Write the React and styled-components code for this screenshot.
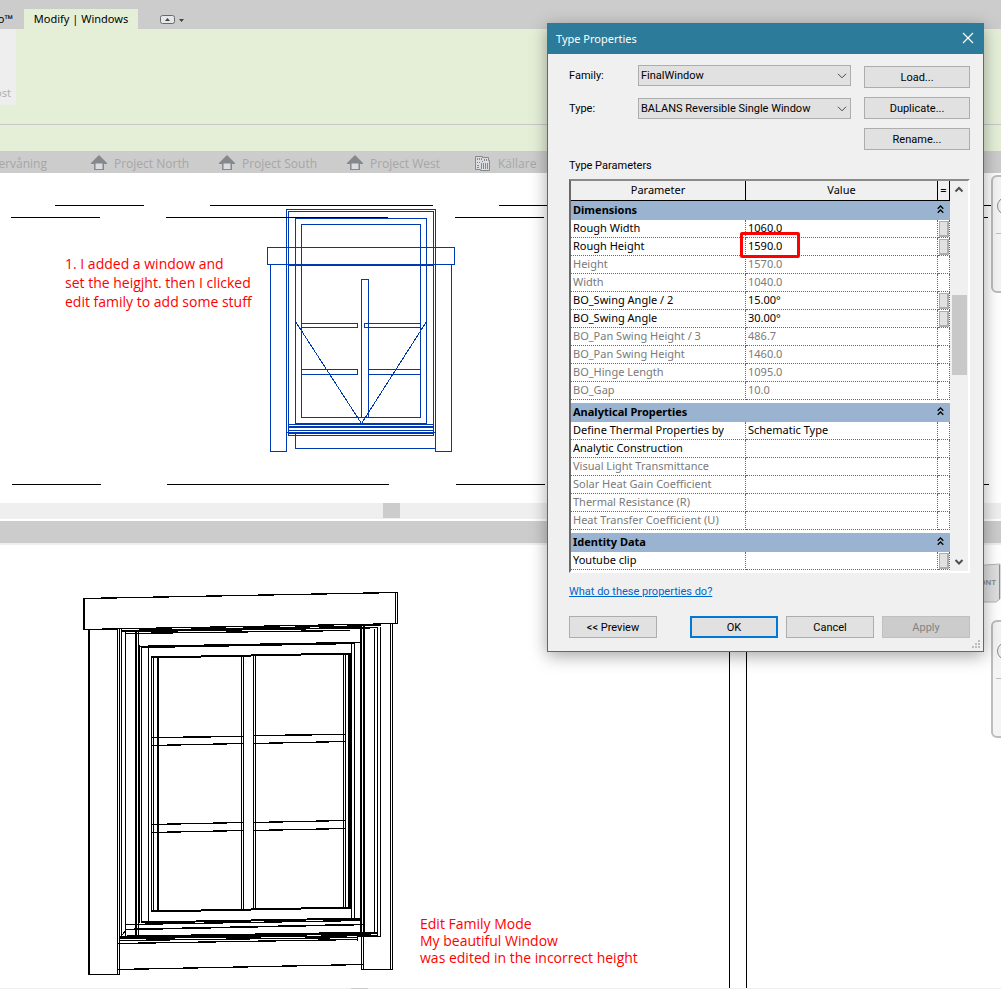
import React from 'react';
import styled, { createGlobalStyle, css } from 'styled-components';

const GlobalStyle = createGlobalStyle`
  * {
    box-sizing: border-box;
  }

  body {
    margin: 0;
    font-family: "Noto Sans", "Open Sans", sans-serif;
    font-size: 11px;
    color: #000;
    background: #fff;
  }

  button,
  select {
    font: inherit;
    color: inherit;
    margin: 0;
  }
`;

const Page = styled.div`
  position: relative;
  display: flex;
  flex-direction: column;
  min-height: 100vh;
  overflow: hidden;
`;

/* Ribbon */

const TabStrip = styled.header`
  display: flex;
  align-items: flex-end;
  height: 29px;
  background: #ccc;
`;

const CutTab = styled.span`
  display: flex;
  justify-content: flex-end;
  width: 13px;
  margin-right: 11px;
  line-height: 20px;
  overflow: hidden;
`;

const ActiveTab = styled.button`
  width: 114px;
  height: 20px;
  padding: 0;
  border: 0;
  line-height: 20px;
  white-space: nowrap;
  background: #e5efd8;
`;

const RibbonToggle = styled.button`
  display: flex;
  height: 20px;
  margin-left: 22px;
  padding: 5px 0 0;
  border: 0;
  background: none;
`;

const Ribbon = styled.div`
  height: 96px;
  background: #e5efd8;
  border-bottom: 1px solid #c8c8c8;
`;

const RibbonPanel = styled.div`
  display: flex;
  align-items: flex-end;
  justify-content: flex-end;
  width: 16px;
  height: 76px;
  padding: 0 5px 5px 0;
  overflow: hidden;
  color: #b0b0b0;
  background: #eee;
`;

const OptionsBar = styled.div`
  height: 26px;
  background: #e5efd8;
`;

const ViewTabs = styled.nav`
  display: flex;
  align-items: center;
  height: 22px;
  padding-top: 2px;
  font-family: "Open Sans", "Noto Sans", sans-serif;
  font-size: 12px;
  background: #ccc;
`;

const ViewTab = styled.a`
  display: flex;
  align-items: center;
  gap: 7px;
  flex: none;
  width: ${(props) => props.$width}px;
  color: #a6a6a6;
  text-decoration: none;
  white-space: nowrap;
  overflow: hidden;
  justify-content: ${(props) => (props.$cut ? 'flex-end' : 'flex-start')};
  padding-right: ${(props) => (props.$cut ? 44 : 0)}px;
`;

/* Views */

const View = styled.section`
  position: relative;
  display: flex;
  height: 330px;
  overflow: hidden;
  ${(props) =>
    props.$fill &&
    css`
      flex: 1;
      height: auto;
      min-height: 443px;
    `}
`;

const Drawing = styled.svg`
  flex: 1;
  height: auto;
  fill: none;
  shape-rendering: crispEdges;
`;

const Note = styled.p`
  position: absolute;
  left: ${(props) => props.$x}px;
  top: ${(props) => props.$y}px;
  margin: 0;
  font-family: "Open Sans", "Noto Sans", sans-serif;
  font-size: 14px;
  line-height: ${(props) => props.$leading}px;
  color: #f00;
  white-space: nowrap;
`;

const Widgets = styled.svg`
  position: absolute;
  top: 0;
  right: 0;
  width: 30px;
  height: 200px;
`;

const ViewScroll = styled.div`
  height: 16px;
  padding-left: 383px;
  background: #efefef;
`;

const ViewThumb = styled.div`
  width: 17px;
  height: 15px;
  background: #ccc;
`;

const ViewTitle = styled.div`
  height: 26px;
  background: #ccc;
  border: solid #efefef;
  border-width: 0 0 2px;
  border-top: 2px solid #fff;
`;

const BottomScroll = styled.div`
  height: 1px;
  padding-left: 351px;
  background: #eee;

  &::after {
    content: '';
    display: block;
    width: 17px;
    height: 1px;
    background: #ccc;
  }
`;

/* Dialog */

const Dialog = styled.section`
  position: absolute;
  top: 23px;
  right: 17px;
  width: 437px;
  border: 1px solid #2d7b9a;
  background: #f0f0f0;
  box-shadow: 0 4px 16px rgba(0, 0, 0, 0.35);
  font-family: Roboto, "Noto Sans", sans-serif;
`;

const TitleBar = styled.header`
  display: flex;
  align-items: center;
  justify-content: space-between;
  height: 30px;
  padding: 0 9px 2px 8px;
  color: #fff;
  background: #2d7b9a;
`;

const Title = styled.h1`
  margin: 0;
  font-family: "Noto Sans", sans-serif;
  font-size: 11px;
  font-weight: 400;
`;

const CloseButton = styled.button`
  display: flex;
  padding: 0;
  border: 0;
  background: none;
`;

const DialogBody = styled.div`
  padding: 11px 13px 13px 21px;
`;

const Pickers = styled.div`
  display: flex;
  justify-content: space-between;
`;

const Fields = styled.div`
  display: flex;
  flex-direction: column;
  gap: 12px;
`;

const Field = styled.label`
  display: grid;
  grid-template-columns: 69px 213px;
  align-items: center;
`;

const SelectBox = styled.span`
  display: grid;
  align-items: center;

  > * {
    grid-area: 1 / 1;
  }

  svg {
    justify-self: end;
    margin-right: 4px;
    pointer-events: none;
  }
`;

const Select = styled.select`
  appearance: none;
  width: 100%;
  height: 21px;
  padding: 0 2px;
  border: 1px solid #adadad;
  border-radius: 0;
  background: #e1e1e1;
`;

const ButtonStack = styled.div`
  display: flex;
  flex-direction: column;
  gap: 9px;
  padding-top: 1px;
`;

const Button = styled.button`
  width: ${(props) => (props.$wide ? 106 : 88)}px;
  height: 22px;
  padding: 0;
  border: 1px solid #adadad;
  background: #e1e1e1;

  ${(props) =>
    props.$primary &&
    css`
      border: 2px solid #0078d7;
    `}

  &:disabled {
    color: #838383;
    border-color: #bfbfbf;
    background: #ccc;
  }
`;

const Caption = styled.h2`
  margin: 8px 0 5px;
  font-size: 11px;
  font-weight: 400;
  line-height: 16px;
`;

const GridFrame = styled.div`
  display: flex;
  height: 394px;
  border: 2px solid #696969;
  border-color: #8a8a8a #fff #fff #696969;
  background: #fff;
`;

const Params = styled.table`
  flex: 1;
  width: 379px;
  height: 389px;
  table-layout: fixed;
  border-spacing: 0;
  font-family: "Noto Sans", sans-serif;
  line-height: 15px;
`;

const HeadCell = styled.th`
  height: 20px;
  padding: 0 0 2px;
  border-right: 1px solid #000;
  border-bottom: 1px solid #000;
  font-weight: 400;
  background: #f0f0f0;
`;

const GroupCell = styled.th`
  height: 19px;
  padding: 0 6px 2px 2px;
  font-weight: 700;
  text-align: left;
  background: #9ab3d0;
`;

const GroupLabel = styled.span`
  display: flex;
  align-items: center;
  justify-content: space-between;
`;

const Cell = styled.td`
  position: relative;
  height: 18px;
  padding: 0 0 2px 2px;
  border: 0 dotted #696969;
  border-width: 0 1px 1px 0;
  color: ${(props) => (props.$dim ? '#7a7a7a' : '#000')};
  white-space: nowrap;
`;

const LinkCell = styled(Cell)`
  padding: 0 0 0 1px;
`;

const GapCell = styled.td`
  height: 3px;
  padding: 0;
`;

const LinkButton = styled.button`
  display: block;
  width: 10px;
  height: 16px;
  padding: 0;
  border: 1px solid #adadad;
  border-right-width: 2px;
  border-bottom-width: 2px;
  background: #e1e1e1;
`;

const Highlight = styled.span`
  position: absolute;
  z-index: 1;
  left: -6px;
  top: -6px;
  width: 60px;
  height: 26px;
  border: 3px solid #f00;
  border-radius: 2px;
`;

const Scrollbar = styled.div`
  display: flex;
  flex-direction: column;
  align-items: center;
  width: 18px;
  background: #f0f0f0;
`;

const ScrollThumb = styled.div`
  width: 15px;
  height: 80px;
  margin: 95px 0 auto;
  background: #c8c8c8;
`;

const HelpLink = styled.a`
  display: inline-block;
  margin-top: 11px;
  line-height: 16px;
  color: #0066cc;
`;

const Actions = styled.footer`
  display: flex;
  gap: 8px;
  margin-top: 16px;

  button:first-child {
    margin-right: 25px;
  }
`;

const Grip = styled.svg`
  position: absolute;
  right: 2px;
  bottom: 2px;
`;

const groups = [
  {
    name: 'Dimensions',
    rows: [
      { name: 'Rough Width', value: '1060.0', link: true },
      { name: 'Rough Height', value: '1590.0', link: true, marked: true },
      { name: 'Height', value: '1570.0', dim: true },
      { name: 'Width', value: '1040.0', dim: true },
      { name: 'BO_Swing Angle / 2', value: '15.00°', link: true },
      { name: 'BO_Swing Angle', value: '30.00°', link: true },
      { name: 'BO_Pan Swing Height / 3', value: '486.7', dim: true },
      { name: 'BO_Pan Swing Height', value: '1460.0', dim: true },
      { name: 'BO_Hinge Length', value: '1095.0', dim: true },
      { name: 'BO_Gap', value: '10.0', dim: true },
    ],
  },
  {
    name: 'Analytical Properties',
    rows: [
      { name: 'Define Thermal Properties by', value: 'Schematic Type' },
      { name: 'Analytic Construction' },
      { name: 'Visual Light Transmittance', dim: true },
      { name: 'Solar Heat Gain Coefficient', dim: true },
      { name: 'Thermal Resistance (R)', dim: true },
      { name: 'Heat Transfer Coefficient (U)', dim: true },
    ],
  },
  {
    name: 'Identity Data',
    rows: [{ name: 'Youtube clip', link: true }],
  },
];

const HouseIcon = () => (
  <svg width="16" height="16" viewBox="0 0 16 16">
    <path d="M8 0 0 8v1h3v6h10V9h3V8z" fill="#85888d" />
    <path d="M4.500 8.500h7V14h-7z" fill="#dcdde0" />
  </svg>
);

const PlanIcon = () => (
  <svg width="17" height="17" viewBox="0 0 17 17" fill="none" stroke="#85888d">
    <path d="M1.500 1.500h7v1h6v3h1v10h-9v-1h-5z" fill="#dcdde0" />
    <path d="M3.500 3v2M5.500 3v2M7.500 3v2M3.500 7v1M5.500 7v1M3 10.500h2M10.500 4v2M12.500 4v2M7.500 8v6M9.500 8v6M11.500 8v6M13.500 8v6M3 12.500h2M8.500 6v1" />
  </svg>
);

const Chevron = () => (
  <svg width="10" height="6" viewBox="0 0 10 6" fill="none" stroke="#444">
    <path d="M1 .8 5 4.800 9 .8" />
  </svg>
);

const ScrollArrow = ({ down }) => (
  <svg width="18" height="19" viewBox="0 0 18 19" fill="none" stroke="#505050" strokeWidth="2">
    <path d={down ? 'M5.500 8 9 11.500 12.500 8' : 'M5.500 10.500 9 7l3.500 3.500'} />
  </svg>
);

const DoubleChevron = () => (
  <svg width="7" height="9" viewBox="0 0 7 9" fill="none" stroke="#000" strokeWidth="1.300">
    <path d="M.7 3.700 3.500 1l2.800 2.700M.7 7.700 3.500 5l2.800 2.700" />
  </svg>
);

// y, from, to
const levels = [
  [205, 55, 144], [205, 210, 433], [205, 499, 722], [205, 900, 996],
  [217, 11, 100], [217, 166, 388], [217, 455, 544], [217, 900, 988],
  [484, 12, 101], [484, 167, 389], [484, 456, 545], [484, 900, 989],
];

const ElevationDrawing = () => (
  <Drawing>
    <g stroke="#0038b0" transform="translate(0.500 -172.500)">
      <path d="M286 451V209h149v242M288 435V211h145v224zM295 423V218h131v205M301 417V224h119v193z" />
      <path d="M267 247h187v17H267zM288 265h145M270 264v187h16M451 264v187h-16" />
      <path d="M361 417V279h7v138M301 323h56v4h-56M420 323h-56v4h56M301 369h56v5h-56M420 369h-52M368 374h52" />
      <path d="M295 321 361 423 426 321" />
      <path d="M295 423h131M288 424h145M288 426h145M288 427h145M288 430h145M286 432h149M288 433h145M295 433v15h140" />
    </g>
    <g stroke="#000" transform="translate(0 -172.500)">
      {levels.map(([y, from, to]) => (
        <path key={`${y}-${from}`} d={`M${from} ${y}H${to}`} />
      ))}
    </g>
  </Drawing>
);

// x, top, bottom, stroke width
const uprights = [
  [83, 598, 629, 2], [395, 592, 623, 1], [397, 592, 623, 1],
  [88, 629, 974, 2], [117, 628, 974, 1], [119, 628, 974, 1], [121, 629, 937, 1],
  [125, 632, 935, 1], [135, 632, 935, 2], [138, 632, 935, 1], [139, 645, 922, 1],
  [141, 647, 922, 1], [148, 647, 922, 1], [151, 657, 911, 1], [153, 657, 911, 1],
  [157, 657, 911, 2], [241, 656, 909, 1], [243, 656, 909, 1], [253, 656, 909, 1],
  [255, 656, 909, 1], [343, 655, 908, 1], [345, 655, 908, 1], [348, 654, 908, 4],
  [351, 643, 918, 1], [354, 643, 918, 1], [360, 624, 932, 2], [363, 624, 932, 2],
  [361, 932, 969, 1], [363, 932, 969, 1], [374, 629, 933, 1], [377, 627, 935, 1],
  [380, 627, 936, 1], [390, 623, 969, 1], [392, 623, 969, 1], [357, 936, 940, 1],
];

// x1, y1, x2, y2, stroke width (thin when left out)
const rails = [
  [83, 598, 397, 592], [83, 629, 380, 623.500], [373, 623, 397, 623],
  [121, 630, 380, 625], [121, 631, 376, 627, 1.800], [125, 633, 349, 630],
  [138, 646, 360, 642, 1.600], [141, 647, 354, 643], [151, 657, 351, 653, 2],
  [151, 737, 243, 736], [253, 735, 345, 734], [151, 745, 243, 743], [253, 743, 345, 741],
  [151, 824, 243, 822], [253, 822, 345, 820], [151, 832, 243, 830], [253, 830, 345, 828],
  [151, 911, 351, 907, 2], [141, 922, 361, 918, 2], [125, 924, 361, 920],
  [125, 929, 363, 924, 1.600], [121, 936, 376, 932, 1.800], [121, 937, 377, 933, 1.800],
  [119, 938, 377, 935], [119, 940, 357, 937], [117, 943, 357, 939],
  [357, 936, 380, 936], [117, 969, 363, 964], [88, 974, 119, 974], [361, 969, 392, 969],
];

const PerspectiveDrawing = () => (
  <Drawing>
    <g transform="translate(0 -545)" stroke="#000">
      {uprights.map(([x, top, bottom, weight]) => (
        <path key={`${x}-${top}`} strokeWidth={weight} d={`M${x + weight / 2} ${top}V${bottom + 1}`} />
      ))}
      {rails.map(([x1, y1, x2, y2, weight]) => (
        <path
          key={`${x1}-${y1}`}
          strokeWidth={weight || (y1 === y2 ? 1 : 1.300)}
          d={`M${x1} ${y1 + 0.500}L${x2 + 1} ${y2 + 0.500}`}
        />
      ))}
      <path d="M119.500 938.500l6-8M729.500 600v1400M746.500 600v1400" />
    </g>
  </Drawing>
);

const NavWheel = ({ top }) => (
  <g transform={`translate(0 ${top})`} fill="none" stroke="#bdbdbd">
    <rect x="21" y="1" width="40" height="116" rx="5" fill="#f4f4f4" strokeWidth="2" />
    <circle cx="35" cy="31" r="8.500" stroke="#8c8c8c" fill="#eee" />
    <path d="M25 58.500h10" />
  </g>
);

const Picker = ({ id, label, value }) => (
  <Field htmlFor={id}>
    {label}
    <SelectBox>
      <Select id={id} defaultValue={value}>
        <option>{value}</option>
      </Select>
      <Chevron />
    </SelectBox>
  </Field>
);

const ParamRow = ({ row }) => (
  <tr>
    <Cell $dim={row.dim}>{row.name}</Cell>
    <Cell $dim={row.dim}>
      {row.value}
      {row.marked && <Highlight />}
    </Cell>
    <LinkCell>{row.link && <LinkButton aria-label={`Associate ${row.name}`} />}</LinkCell>
  </tr>
);

const ParamTable = () => (
  <GridFrame>
    <Params>
      <colgroup>
        <col width="175" />
        <col />
        <col width="12" />
      </colgroup>
      <thead>
        <tr>
          <HeadCell>Parameter</HeadCell>
          <HeadCell>Value</HeadCell>
          <HeadCell>=</HeadCell>
        </tr>
      </thead>
      {groups.map((group, index) => (
        <tbody key={group.name}>
          {index > 0 && (
            <tr>
              <GapCell colSpan={3} />
            </tr>
          )}
          <tr>
            <GroupCell colSpan={3}>
              <GroupLabel>
                {group.name}
                <DoubleChevron />
              </GroupLabel>
            </GroupCell>
          </tr>
          {group.rows.map((row) => (
            <ParamRow key={row.name} row={row} />
          ))}
        </tbody>
      ))}
    </Params>
    <Scrollbar>
      <ScrollArrow />
      <ScrollThumb />
      <ScrollArrow down />
    </Scrollbar>
  </GridFrame>
);

const TypeProperties = () => (
  <Dialog role="dialog" aria-labelledby="dialog-title">
    <TitleBar>
      <Title id="dialog-title">Type Properties</Title>
      <CloseButton aria-label="Close">
        <svg width="12" height="12" viewBox="0 0 12 12" stroke="#fff" strokeWidth="1.200">
          <path d="M1 1l10 10M11 1 1 11" />
        </svg>
      </CloseButton>
    </TitleBar>
    <DialogBody>
      <Pickers>
        <Fields>
          <Picker id="family" label="Family:" value="FinalWindow" />
          <Picker id="type" label="Type:" value="BALANS Reversible Single Window" />
        </Fields>
        <ButtonStack>
          <Button $wide>Load...</Button>
          <Button $wide>Duplicate...</Button>
          <Button $wide>Rename...</Button>
        </ButtonStack>
      </Pickers>
      <Caption>Type Parameters</Caption>
      <ParamTable />
      <HelpLink href="#help">What do these properties do?</HelpLink>
      <Actions>
        <Button>&lt;&lt; Preview</Button>
        <Button $primary>OK</Button>
        <Button>Cancel</Button>
        <Button disabled>Apply</Button>
      </Actions>
    </DialogBody>
    <Grip width="9" height="9" fill="#bdbdbd">
      <path d="M6 0h2v2H6zM3 3h2v2H3zM6 3h2v2H6zM0 6h2v2H0zM3 6h2v2H3zM6 6h2v2H6z" />
    </Grip>
  </Dialog>
);

const App = () => (
  <Page>
    <GlobalStyle />
    <TabStrip>
      <CutTab>o™</CutTab>
      <ActiveTab>Modify | Windows</ActiveTab>
      <RibbonToggle aria-label="Minimize ribbon">
        <svg width="25" height="11" viewBox="0 0 25 11">
          <rect x=".5" y="1.500" width="14" height="8" rx="2" fill="#e6e6e6" stroke="#666a70" />
          <path d="M5 7 7.500 4 10 7zM19 5h5l-2.500 3z" fill="#444" />
        </svg>
      </RibbonToggle>
    </TabStrip>
    <Ribbon>
      <RibbonPanel>ost</RibbonPanel>
    </Ribbon>
    <OptionsBar />
    <ViewTabs>
      <ViewTab href="#plan" $width={91} $cut>
        Övervåning
      </ViewTab>
      <ViewTab href="#north" $width={128}>
        <HouseIcon />
        Project North
      </ViewTab>
      <ViewTab href="#south" $width={128}>
        <HouseIcon />
        Project South
      </ViewTab>
      <ViewTab href="#west" $width={127}>
        <HouseIcon />
        Project West
      </ViewTab>
      <ViewTab href="#cellar" $width={128}>
        <PlanIcon />
        Källare
      </ViewTab>
    </ViewTabs>

    <View>
      <ElevationDrawing />
      <Note $x={65} $y={81} $leading={19}>
        1. I added a window and
        <br />
        set the heigjht. then I clicked
        <br />
        edit family to add some stuff
      </Note>
      <Widgets>
        <NavWheel top={2} />
      </Widgets>
    </View>
    <ViewScroll>
      <ViewThumb />
    </ViewScroll>
    <ViewTitle />
    <View $fill>
      <PerspectiveDrawing />
      <Note $x={420} $y={370} $leading={17}>
        Edit Family Mode
        <br />
        My beautiful Window
        <br />
        was edited in the incorrect height
      </Note>
      <Widgets>
        <path d="M0 21l29-2v35l-4 3H0z" fill="#dedede" stroke="#b5b5b5" />
        <path d="M28.500 20v34" stroke="#8c8c8c" />
        <text
          x="25"
          y="40"
          textAnchor="end"
          fontFamily="Roboto, sans-serif"
          fontSize="8"
          fontWeight="500"
          fill="#85888d"
        >
          FRONT
        </text>
        <NavWheel top={75} />
      </Widgets>
    </View>
    <BottomScroll />
    <TypeProperties />
  </Page>
);

export default App;
